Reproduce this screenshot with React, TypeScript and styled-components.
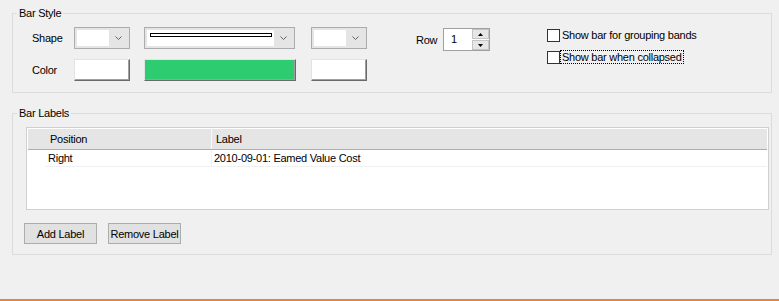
import React from "react"
import styled, { createGlobalStyle } from "styled-components"

const GlobalStyle = createGlobalStyle`
  html, body {
    margin: 0;
    padding: 0;
    background: #f0f0f0;
  }
  body {
    font-family: "Liberation Sans", Arial, sans-serif;
    font-size: 11px;
    letter-spacing: -0.25px;
    color: #000;
  }
  * {
    box-sizing: border-box;
  }
`

const Window = styled.div`
  width: 779px;
  height: 301px;
  padding: 7px 7px 0 12px;
  background: #f0f0f0;
  border-bottom: 2px solid #e8833a;
  display: flex;
  flex-direction: column;
`

const GroupBox = styled.fieldset<{ $gap?: number }>`
  margin: ${(p) => p.$gap ?? 0}px 0 0 0;
  padding: 0;
  min-width: 0;
  border: 1px solid #dcdcdc;
`

const GroupTitle = styled.legend`
  margin-left: 4px;
  padding: 0 2px;
  height: 13px;
  line-height: 13px;
  font-size: 11px;
`

const StyleBody = styled.div`
  display: flex;
  align-items: flex-start;
  padding: 7px 0 11px 0;
`

const ShapeGrid = styled.div`
  display: grid;
  grid-template-columns: 61px 70px 167px 56px;
  grid-template-rows: 22px 22px;
  row-gap: 10px;
  align-items: center;
`

const FieldLabel = styled.div`
  padding-left: 19px;
`

const Combo = styled.div<{ $w: number }>`
  width: ${(p) => p.$w}px;
  height: 22px;
  display: flex;
  padding: 2px;
  border: 1px solid #acacac;
  background: #e5e5e5;
`

const ComboValue = styled.div`
  flex: 1;
  display: flex;
  align-items: flex-start;
  padding: 3px 0 0 3px;
  background: #fff;
`

const LinePattern = styled.div`
  width: 122px;
  height: 4px;
  border: 1px solid #000;
  background: #fff;
`

const ComboArrow = styled.div`
  width: 18px;
  display: flex;
  align-items: center;
  justify-content: center;
`

const Swatch = styled.div<{ $w: number; $color: string }>`
  width: ${(p) => p.$w}px;
  height: 22px;
  background: ${(p) => p.$color};
  border: 1px solid;
  border-color: #e3e3e3 #696969 #696969 #e3e3e3;
  box-shadow: inset -1px -1px 0 #a0a0a0;
`

const RowBlock = styled.div`
  display: flex;
  align-items: center;
  margin: 1px 0 0 49px;
`

const RowLabel = styled.div`
  width: 27px;
`

const SpinBox = styled.div`
  width: 47px;
  height: 23px;
  display: flex;
  border: 1px solid #a0a0a0;
  background: #fff;
`

const SpinText = styled.div`
  flex: 1;
  padding: 4px 0 0 7px;
`

const SpinButtons = styled.div`
  width: 17px;
  display: flex;
  flex-direction: column;
  gap: 1px;
`

const SpinButton = styled.div`
  flex: 1;
  display: flex;
  align-items: center;
  justify-content: center;
  border: 1px solid #c4c4c4;
  background: #e6e6e6;
`

const CheckList = styled.div`
  display: flex;
  flex-direction: column;
  gap: 8px;
  margin: 1px 0 0 57px;
`

const CheckRow = styled.label`
  display: flex;
  align-items: center;
  height: 14px;
`

const CheckBox = styled.span`
  width: 13px;
  height: 13px;
  border: 1px solid #333;
  background: #fff;
`

const CheckText = styled.span<{ $focused?: boolean }>`
  height: 14px;
  line-height: 12px;
  padding: 0 1px;
  border: 1px dotted ${(p) => (p.$focused ? "#000" : "transparent")};
`

const LabelsBody = styled.div`
  padding: 7px 2px 10px 11px;
`

const ListView = styled.div`
  height: 83px;
  margin-left: 2px;
  padding: 1px;
  border: 1px solid #d0d0d0;
  background: #fff;
`

const ListHeader = styled.div`
  height: 21px;
  display: flex;
  background: #e5e5e5;
  border-bottom: 1px solid #adadad;
`

const HeaderCell = styled.div<{ $w?: number; $pad: number }>`
  ${(p) => (p.$w ? `width: ${p.$w}px; border-right: 1px solid #fafafa;` : "flex: 1;")}
  padding-left: ${(p) => p.$pad}px;
  line-height: 20px;
`

const ListRow = styled.div`
  height: 17px;
  margin-left: 17px;
  display: flex;
  border-bottom: 1px solid #f0f0f0;
`

const RowCell = styled.div<{ $w?: number; $pad: number }>`
  ${(p) => (p.$w ? `width: ${p.$w}px; border-right: 1px solid #f0f0f0;` : "flex: 1;")}
  padding-left: ${(p) => p.$pad}px;
  line-height: 16px;
`

const ButtonBar = styled.div`
  display: flex;
  gap: 11px;
  margin-top: 13px;
`

const Button = styled.button`
  width: 73px;
  height: 21px;
  padding: 0;
  border: 1px solid #adadad;
  background: #e1e1e1;
  font-family: inherit;
  font-size: 11px;
  letter-spacing: -0.25px;
  color: #000;
`

const Chevron = () => (
  <svg width="7" height="4" viewBox="0 0 7 4">
    <path d="M0.5 0.5 L3.5 3.5 L6.5 0.5" fill="none" stroke="#606060" strokeWidth="1" />
  </svg>
)

const Triangle = ({ up }: { up?: boolean }) => (
  <svg width="5" height="3" viewBox="0 0 5 3">
    <path d={up ? "M0 3 L2.5 0 L5 3 Z" : "M0 0 L2.5 3 L5 0 Z"} fill="#000" />
  </svg>
)

type ComboProps = {
  width: number,
  pattern?: boolean,
}

function ComboBox({ width, pattern }: ComboProps) {
  return (
    <Combo $w={width}>
      <ComboValue>{pattern && <LinePattern />}</ComboValue>
      <ComboArrow>
        <Chevron />
      </ComboArrow>
    </Combo>
  )
}

const labels = [
  { position: "Right", label: "2010-09-01: Eamed Value Cost" },
]

export default function App() {
  return (
    <>
      <GlobalStyle />
      <Window>
        <GroupBox>
          <GroupTitle>Bar Style</GroupTitle>
          <StyleBody>
            <ShapeGrid>
              <FieldLabel>Shape</FieldLabel>
              <ComboBox width={56} />
              <ComboBox width={151} pattern />
              <ComboBox width={56} />

              <FieldLabel>Color</FieldLabel>
              <Swatch $w={56} $color="#ffffff" />
              <Swatch $w={152} $color="#2ecc71" />
              <Swatch $w={56} $color="#ffffff" />
            </ShapeGrid>

            <RowBlock>
              <RowLabel>Row</RowLabel>
              <SpinBox>
                <SpinText>1</SpinText>
                <SpinButtons>
                  <SpinButton><Triangle up /></SpinButton>
                  <SpinButton><Triangle /></SpinButton>
                </SpinButtons>
              </SpinBox>
            </RowBlock>

            <CheckList>
              <CheckRow>
                <CheckBox />
                <CheckText>Show bar for grouping bands</CheckText>
              </CheckRow>
              <CheckRow>
                <CheckBox />
                <CheckText $focused>Show bar when collapsed</CheckText>
              </CheckRow>
            </CheckList>
          </StyleBody>
        </GroupBox>

        <GroupBox $gap={14}>
          <GroupTitle>Bar Labels</GroupTitle>
          <LabelsBody>
            <ListView>
              <ListHeader>
                <HeaderCell $w={184} $pad={22}>Position</HeaderCell>
                <HeaderCell $pad={4}>Label</HeaderCell>
              </ListHeader>
              {labels.map((item) => (
                <ListRow key={item.label}>
                  <RowCell $w={167} $pad={3}>{item.position}</RowCell>
                  <RowCell $pad={2}>{item.label}</RowCell>
                </ListRow>
              ))}
            </ListView>
            <ButtonBar>
              <Button>Add Label</Button>
              <Button>Remove Label</Button>
            </ButtonBar>
          </LabelsBody>
        </GroupBox>
      </Window>
    </>
  )
}
